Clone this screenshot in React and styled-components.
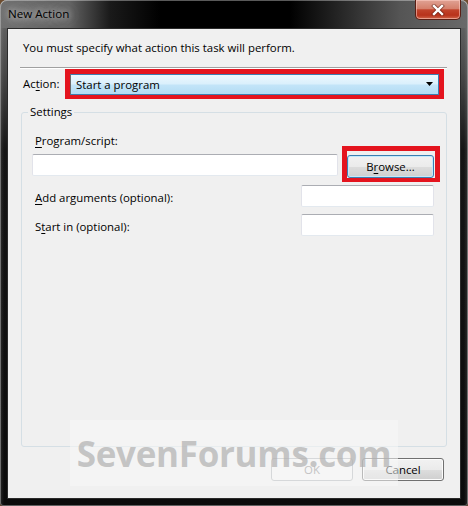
import styled, { createGlobalStyle } from "styled-components";

const GlobalStyle = createGlobalStyle`
  html, body { margin: 0; padding: 0; }
  body {
    background: #6e4d2f;
    font-family: "Open Sans", "Segoe UI", sans-serif;
    font-size: 11.4px;
    color: #000;
  }
`;

const Window = styled.div`
  position: relative;
  width: 468px;
  height: 506px;
  box-sizing: border-box;
  display: flex;
  flex-direction: column;
  padding: 0 7px 7px 7px;
  border-radius: 7px 7px 3px 3px;
  background:
    linear-gradient(90deg, rgba(255,255,255,0.12) 0, transparent 4px, transparent 464px, rgba(255,255,255,0.12) 468px),
    linear-gradient(180deg, #6c6c6c 0px, #4a4a4a 70px, #151515 150px, #0b0b0b 100%);
  box-shadow: inset 0 0 0 1px rgba(200,200,200,0.45);
`;

const TitleBar = styled.div`
  height: 28px;
  margin: 0 -7px;
  padding: 0 7px 0 8px;
  display: flex;
  align-items: center;
  border-radius: 7px 7px 0 0;
  background: linear-gradient(90deg,
    #6f6f6f 0px, #616161 70px, #1a1a1a 110px, #000 160px,
    #000 290px, #262626 340px, #555 400px, #6a6a6a 468px);
  box-shadow: inset 0 1px 0 rgba(255,255,255,0.35), inset 1px 0 0 rgba(255,255,255,0.3), inset -1px 0 0 rgba(255,255,255,0.3);
`;

const Title = styled.span`
  font-size: 11.6px;
  line-height: 16px;
  margin-top: -1px;
  color: #000;
  text-shadow: 0 0 6px #c8c8c8, 0 0 12px rgba(220,220,220,0.9), 0 0 18px rgba(200,200,200,0.7);
`;

const CloseButton = styled.div`
  margin-left: auto;
  align-self: flex-start;
  width: 46px;
  height: 20px;
  box-sizing: border-box;
  display: flex;
  align-items: center;
  justify-content: center;
  border: 1px solid #5a1e14;
  border-top: none;
  border-radius: 0 0 5px 5px;
  background: linear-gradient(180deg, #e0a294 0%, #d5806c 45%, #c1432b 52%, #b8321b 80%, #d0654a 100%);
  box-shadow: inset 0 0 0 1px rgba(255,210,200,0.55);
`;

const Client = styled.div`
  flex: 1;
  display: flex;
  flex-direction: column;
  background: #f0f0f0;
  border: 1px solid #2a2a2a;
`;

const Instruction = styled.div`
  margin: 11px 0 0 15px;
  line-height: 16px;
`;

const Separator = styled.div`
  margin: 11px 13px 0 12px;
  border-top: 1px solid #a0a0a0;
  border-bottom: 1px solid #fff;
`;

const ActionRow = styled.div`
  display: flex;
  align-items: center;
  height: 30px;
  margin-left: 15px;
`;

const ActionLabel = styled.span`
  width: 42px;
  line-height: 16px;
`;

const Highlight = styled.div`
  box-sizing: border-box;
  flex-shrink: 0;
  border: 5px solid #e4141e;
  border-bottom-width: 4px;
`;

const ComboHighlight = styled(Highlight)`
  width: 379px;
  height: 30px;
`;

const Combo = styled.div`
  height: 21px;
  box-sizing: border-box;
  display: flex;
  align-items: center;
  padding: 0 4px 0 5px;
  border: 1px solid #3c7fb1;
  border-left-color: #6c6c6c;
  background: linear-gradient(180deg, #ecf7fd 0%, #dbf0fc 45%, #c2e4f8 55%, #b3dcf4 100%);
`;

const ComboText = styled.span`
  flex: 1;
  line-height: 16px;
`;

const ButtonHighlight = styled(Highlight)`
  margin: -8px -6px -4px 4px;
  padding: 4px 1px 0 0;
`;

const Settings = styled.fieldset`
  margin: 5px 13px 0 13px;
  padding: 0 12px 0 10px;
  height: 343px;
  box-sizing: border-box;
  border: 1px solid #d5dfe5;
  border-radius: 3px;
  min-width: 0;
`;

const Legend = styled.legend`
  margin-left: -4px;
  padding: 0 2px;
  line-height: 16px;
`;

const FieldLabel = styled.div`
  margin: 13px 0 0 3px;
  line-height: 16px;
`;

const ProgramRow = styled.div`
  display: flex;
  align-items: flex-start;
  margin-top: 5px;
`;

const FieldRow = styled.div`
  display: flex;
  align-items: center;
  justify-content: space-between;
  margin-top: 7px;
  padding-left: 3px;
`;

const RowLabel = styled.span`
  line-height: 16px;
  margin-top: 3px;
`;

const TextBox = styled.div`
  flex-shrink: 0;
  width: ${(p) => p.$width}px;
  height: 22px;
  box-sizing: border-box;
  background: #fff;
  border: 1px solid #e2e3ea;
  border-top-color: #abadb3;
  border-bottom-color: #e3e9ef;
  border-radius: 2px;
`;

const Button = styled.div`
  width: ${(p) => p.$width || 82}px;
  height: 23px;
  box-sizing: border-box;
  display: flex;
  align-items: center;
  justify-content: center;
  border: 1px solid ${(p) => (p.$disabled ? "#adb2b5" : p.$focus ? "#3c7fb1" : "#707070")};
  border-radius: 3px;
  color: ${(p) => (p.$disabled ? "#838383" : "#000")};
  background: ${(p) =>
    p.$disabled
      ? "#f4f4f4"
      : "linear-gradient(180deg, #f2f2f2 0%, #ebebeb 50%, #dddddd 52%, #cfcfcf 100%)"};
  box-shadow: inset 0 0 0 1px ${(p) => (p.$disabled ? "#f4f4f4" : p.$focus ? "#c4e9fb" : "#fcfcfc")};
  line-height: 16px;
`;

const Footer = styled.div`
  display: flex;
  justify-content: flex-end;
  gap: 9px;
  margin: 11px 16px 0 0;
`;

const Key = styled.u`
  text-decoration-thickness: 1px;
  text-underline-offset: 2px;
`;

const Watermark = styled.div`
  position: absolute;
  left: 70px;
  top: 420px;
  width: 328px;
  height: 66px;
  display: flex;
  align-items: center;
  justify-content: center;
  background: rgba(248, 248, 248, 0.55);
  color: rgba(175, 175, 175, 0.7);
  font-family: "Open Sans", sans-serif;
  font-weight: 700;
  font-size: 35px;
  letter-spacing: -0.3px;
  pointer-events: none;
`;

const CloseIcon = () => (
  <svg width="14" height="12" viewBox="0 0 14 12">
    <path d="M3 2 L11 10 M11 2 L3 10" stroke="#5a1a10" strokeWidth="4" strokeLinecap="square" opacity="0.6" />
    <path d="M3 2 L11 10 M11 2 L3 10" stroke="#fff" strokeWidth="2.4" strokeLinecap="square" />
  </svg>
);

const ArrowIcon = () => (
  <svg width="8" height="5" viewBox="0 0 8 5">
    <path d="M0 0 H7 L3.5 4 Z" fill="#000" />
  </svg>
);

export default function App() {
  return (
    <>
      <GlobalStyle />
      <Window>
        <TitleBar>
          <Title>New Action</Title>
          <CloseButton>
            <CloseIcon />
          </CloseButton>
        </TitleBar>
        <Client>
          <Instruction>You must specify what action this task will perform.</Instruction>
          <Separator />
          <ActionRow>
            <ActionLabel>
              Ac<Key>t</Key>ion:
            </ActionLabel>
            <ComboHighlight>
              <Combo>
                <ComboText>Start a program</ComboText>
                <ArrowIcon />
              </Combo>
            </ComboHighlight>
          </ActionRow>
          <Settings>
            <Legend>Settings</Legend>
            <FieldLabel>
              <Key>P</Key>rogram/script:
            </FieldLabel>
            <ProgramRow>
              <TextBox $width={306} />
              <ButtonHighlight>
                <Button $width={87} $focus>
                  B<Key>r</Key>owse...
                </Button>
              </ButtonHighlight>
            </ProgramRow>
            <FieldRow>
              <RowLabel>
                <Key>A</Key>dd arguments (optional):
              </RowLabel>
              <TextBox $width={133} />
            </FieldRow>
            <FieldRow>
              <RowLabel>
                S<Key>t</Key>art in (optional):
              </RowLabel>
              <TextBox $width={133} />
            </FieldRow>
          </Settings>
          <Footer>
            <Button $disabled>OK</Button>
            <Button>Cancel</Button>
          </Footer>
        </Client>
        <Watermark>SevenForums.com</Watermark>
      </Window>
    </>
  );
}
